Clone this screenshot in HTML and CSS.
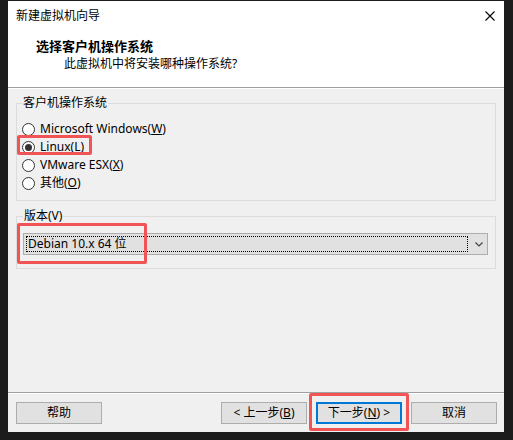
FILE: index.html
```html
<!DOCTYPE html>
<html lang="zh-CN">
<head>
<meta charset="utf-8">
<title>新建虚拟机向导</title>
<link rel="stylesheet" href="styles.css">
</head>
<body>
<div class="window">
  <div class="titlebar">
    <span class="title">新建虚拟机向导</span>
    <svg class="close" width="10" height="10" viewBox="0 0 10 10"><path d="M0.5 0.5 L9.5 9.5 M9.5 0.5 L0.5 9.5" stroke="#000" stroke-width="1.1" fill="none"/></svg>
  </div>
  <div class="header">
    <div class="h-title">选择客户机操作系统</div>
    <div class="h-sub">此虚拟机中将安装哪种操作系统?</div>
  </div>
  <div class="content">
    <fieldset class="group group-os">
      <legend>客户机操作系统</legend>
      <div class="radio"><span class="circle"></span><span class="label">Microsoft Windows(<u>W</u>)</span></div>
      <div class="radio checked"><span class="circle"></span><span class="label">Linux(<u>L</u>)</span><span class="mark mark-linux"></span></div>
      <div class="radio"><span class="circle"></span><span class="label">VMware ESX(<u>X</u>)</span></div>
      <div class="radio"><span class="circle"></span><span class="label">其他(<u>O</u>)</span></div>
    </fieldset>
    <fieldset class="group group-ver">
      <legend>版本(V)</legend>
      <div class="select">
        <div class="select-value">Debian 10.x 64 位</div>
        <div class="select-arrow"><svg width="8" height="5" viewBox="0 0 8 5"><path d="M0.5 0.5 L4 4 L7.5 0.5" stroke="#444" stroke-width="1.2" fill="none"/></svg></div>
        <span class="mark mark-select"></span>
      </div>
    </fieldset>
  </div>
  <div class="footer">
    <div class="btn">帮助</div>
    <div class="spacer"></div>
    <div class="btn">&lt; 上一步(<u>B</u>)</div>
    <div class="btn btn-default">下一步(<u>N</u>) &gt;<span class="mark mark-next"></span></div>
    <div class="btn">取消</div>
  </div>
</div>
</body>
</html>
```

FILE: styles.css
```css
* { box-sizing: border-box; }
html, body {
  margin: 0;
  padding: 0;
  background: #1c1c1c;
  width: 513px;
  height: 440px;
  overflow: hidden;
}
body {
  font-family: "Noto Sans", "Noto Sans CJK SC", sans-serif;
  font-size: 12px;
  color: #000;
}
.window {
  margin: 1px 0 0 8px;
  width: 496px;
  height: 431px;
  background: #f0f0f0;
  display: flex;
  flex-direction: column;
}
.titlebar {
  height: 30px;
  background: #fff;
  display: flex;
  align-items: center;
  padding: 0 9px 0 8px;
}
.titlebar .title { flex: 1; line-height: 30px; }
.close { display: block; }
.header {
  height: 57px;
  background: #fff;
  border-bottom: 1px solid #a0a0a0;
  padding: 7px 0 0 28px;
}
.h-title {
  font-weight: bold;
  font-size: 13px;
  line-height: 17px;
}
.h-sub {
  line-height: 17px;
  padding-left: 28px;
}
.content {
  flex: 1;
  border-top: 1px solid #fff;
  padding: 6px 8px 0 8px;
}
.group {
  margin: 0;
  border: 1px solid #dcdcdc;
  min-width: 0;
}
.group legend {
  line-height: 16px;
  padding: 0 1px;
}
.group-os {
  padding: 9px 5px 8px 5px;
}
.group-ver {
  margin-top: 7px;
  padding: 9px 7px 13px 6px;
}
.radio {
  position: relative;
  height: 18px;
  display: flex;
  align-items: center;
}
.circle {
  width: 13px;
  height: 13px;
  border: 1px solid #333;
  border-radius: 50%;
  background: #fff;
  margin-right: 5px;
  display: flex;
  align-items: center;
  justify-content: center;
}
.radio.checked .circle::after {
  content: "";
  width: 7px;
  height: 7px;
  border-radius: 50%;
  background: #333;
}
.label { line-height: 18px; }
.mark {
  position: absolute;
  border: 3px solid #f05454;
  border-radius: 2px;
  pointer-events: none;
}
.mark-linux {
  left: -5px;
  top: -3px;
  width: 75px;
  height: 20px;
}
.select {
  position: relative;
  height: 22px;
  border: 1px solid #adadad;
  background: #e1e1e1;
  display: flex;
  padding: 2px 0 2px 2px;
}
.select-value {
  width: 442px;
  border: 1px dotted #000;
  line-height: 14px;
  padding-left: 1px;
}
.select-arrow {
  flex: 1;
  display: flex;
  align-items: center;
  justify-content: flex-end;
  padding-right: 4px;
}
.select-arrow svg { display: block; }
.mark-select {
  left: -7px;
  top: -11px;
  width: 130px;
  height: 41px;
}
.footer {
  height: 40px;
  border-top: 1px solid #a0a0a0;
  box-shadow: inset 0 1px 0 #fff;
  display: flex;
  align-items: flex-start;
  padding: 9px 7px 0 8px;
  gap: 9px;
}
.spacer { flex: 1; }
.btn {
  position: relative;
  width: 86px;
  height: 22px;
  border: 1px solid #adadad;
  background: #e1e1e1;
  text-align: center;
  line-height: 20px;
}
.btn-default {
  border: 2px solid #0078d7;
  line-height: 18px;
}
.mark-next {
  left: -9px;
  top: -11px;
  width: 100px;
  height: 38px;
}
```
